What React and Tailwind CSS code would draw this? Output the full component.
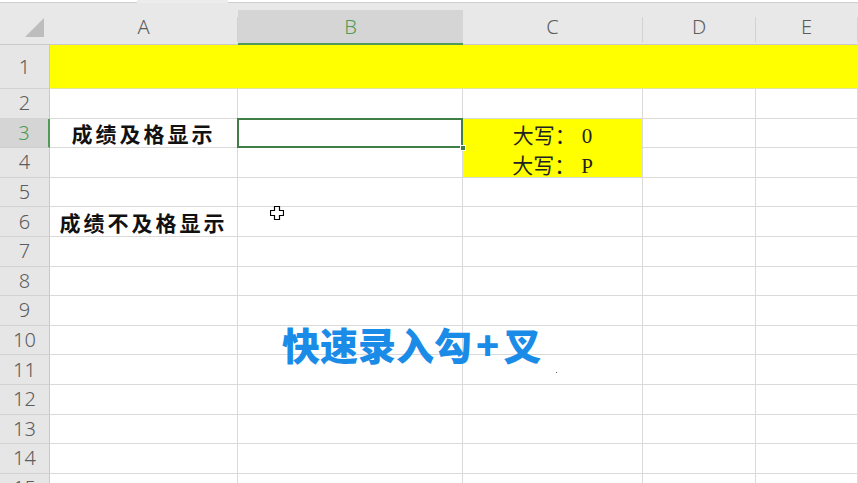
import React from "react";

const cols = ["A", "B", "C", "D", "E"];
const bodyRows = [2, 3, 4, 5, 6, 7, 8, 9, 10, 11, 12, 13, 14, 15];

const cellFont = { fontFamily: '"Liberation Serif", "Noto Sans CJK SC", serif' };

// header cell for a column letter
function ColHeader({ letter }) {
  const selected = letter === "B";
  if (selected) {
    return (
      <div className="flex items-center justify-center bg-[#d5d5d5] border-b-2 border-[#4f9a56] text-[#4f9a56] text-[20px] font-light">
        {letter}
      </div>
    );
  }
  return (
    <div className="flex items-end border-b border-[#c9c9c9]">
      <span className="flex-1 self-center text-center text-[20px] font-light text-[#5c5c5c]">{letter}</span>
      <span className="w-px h-[25px] mb-[2px] bg-[#d2d2d2]" />
    </div>
  );
}

function RowNum({ n }) {
  if (n === 3) {
    return (
      <div className="flex items-center justify-center bg-[#d5d5d5] border-b border-[#cfcfcf] border-r-2 border-r-[#4f9a56] text-[20px] font-light text-[#4f9a56]">
        {n}
      </div>
    );
  }
  return (
    <div className="flex items-center justify-center bg-[#e6e6e6] border-b border-[#d3d3d3] border-r border-r-[#c9c9c9] text-[20px] font-light text-[#5c5c5c]">
      {n}
    </div>
  );
}

function Cell({ r, c }) {
  if (r === 3 && c === "A") {
    return (
      <div className="flex items-end justify-center pb-[1px] border-r border-b border-[#dadada]">
        <span className="text-[21px] leading-none font-bold tracking-[3px] text-[#111]" style={cellFont}>
          成绩及格显示
        </span>
      </div>
    );
  }
  if (r === 6 && c === "A") {
    return (
      <div className="flex items-end justify-center pb-[1px] border-r border-b border-[#dadada]">
        <span className="text-[21px] leading-none font-bold tracking-[3px] text-[#111]" style={cellFont}>
          成绩不及格显示
        </span>
      </div>
    );
  }
  if (r === 3 && c === "B") {
    return (
      <div className="relative border-r border-b border-[#dadada]">
        <div className="absolute -left-[1px] -top-[1px] -right-[1px] -bottom-[1px] border-[2.5px] border-[#3f7f45]" />
        <div className="absolute -right-[4px] -bottom-[4px] w-[6px] h-[6px] bg-[#3f7f45] border border-white" />
      </div>
    );
  }
  if (r === 3 && c === "C") {
    return (
      <div className="row-span-2 flex flex-col items-center pt-[2px] bg-[#ffff00] border-r border-b border-[#dadada]">
        <div className="text-[21px] leading-[30px] text-[#222]" style={cellFont}>
          大写：<span className="ml-[6px]">0</span>
        </div>
        <div className="text-[21px] leading-[30px] text-[#222]" style={cellFont}>
          大写：<span className="ml-[6px]">P</span>
        </div>
      </div>
    );
  }
  if (r === 4 && c === "C") return null;
  return <div className="border-r border-b border-[#dadada]" />;
}

export default function App() {
  return (
    <div className="relative w-[858px] h-[483px] overflow-hidden bg-white" style={{ fontFamily: '"Noto Sans", "Noto Sans CJK SC", sans-serif' }}>
      {/* top strip */}
      <div className="flex h-[3px]">
        <div className="w-[137px] bg-white border-b border-[#cfcfcf]" />
        <div className="w-[91px] bg-[#ececec]" />
        <div className="flex-1 bg-white border-b border-[#cfcfcf]" />
      </div>
      <div className="h-[7px] bg-[#e8e8e8]" />

      <div className="grid grid-cols-[50px_188px_225px_180px_113px_1fr] grid-rows-[35px_44px_repeat(14,29.6px)]">
        {/* corner */}
        <div className="flex items-start justify-end pt-[8px] pr-[6px] bg-[#e8e8e8] border-b border-[#c9c9c9]">
          <svg width="19" height="19" viewBox="0 0 19 19">
            <polygon points="19,0 19,19 0,19" fill="#bdbdbd" />
          </svg>
        </div>
        {cols.map((c) => (
          <div key={c} className="bg-[#e8e8e8] grid">
            <ColHeader letter={c} />
          </div>
        ))}

        {/* row 1 */}
        <RowNum n={1} />
        <div className="col-span-5 bg-[#ffff00] border-b border-[#e3e3a0]" />

        {bodyRows.map((r) => (
          <React.Fragment key={r}>
            <RowNum n={r} />
            {cols.map((c) => (
              <Cell key={c} r={r} c={c} />
            ))}
          </React.Fragment>
        ))}
      </div>

      {/* video caption over the sheet */}
      <div
        className="absolute left-[282px] top-[325px] text-[38px] leading-none font-black text-[#1a8ce8] whitespace-nowrap"
        style={{ fontFamily: '"Noto Sans CJK SC", sans-serif' }}
      >
        快速录入勾<span className="mx-[4px]">+</span>叉
      </div>

      {/* mouse cursor */}
      <svg className="absolute left-[270px] top-[206px]" width="14" height="14" viewBox="0 0 14 14">
        <path d="M4.5 0.5h5v4h4v5h-4v4h-5v-4h-4v-5h4z" fill="#fff" stroke="#000" strokeWidth="1.2" />
      </svg>

      <div className="absolute left-[556px] top-[372px] w-px h-px bg-[#555]" />
    </div>
  );
}
